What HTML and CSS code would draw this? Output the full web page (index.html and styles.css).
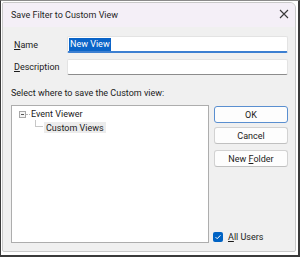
FILE: index.html
```html
<!DOCTYPE html>
<html>
<head>
<meta charset="utf-8">
<link rel="stylesheet" href="styles.css">
</head>
<body>
<div class="frame">
  <div class="window">
    <div class="titlebar">
      <span class="title">Save Filter to Custom View</span>
      <svg class="close" width="10" height="10" viewBox="0 0 10 10"><path d="M1 1 L9 9 M9 1 L1 9" stroke="#3a3a3a" stroke-width="1.1" fill="none"/></svg>
    </div>
    <div class="content">
      <div class="row">
        <label class="lbl"><u>N</u>ame</label>
        <div class="input focused"><span class="sel">New View</span></div>
      </div>
      <div class="row">
        <label class="lbl"><u>D</u>escription</label>
        <div class="input"></div>
      </div>
      <div class="prompt">Select where to save the Custom view:</div>
      <div class="main">
        <div class="tree">
          <div class="node">
            <span class="exp"><svg width="7" height="7" viewBox="0 0 7 7"><rect x="0.5" y="0.5" width="6" height="6" fill="#f4f4f4" stroke="#a8a8a8"/><path d="M2 3.5 H5" stroke="#555" stroke-width="1"/></svg></span>
            <span class="dots"></span>
            <span class="ntext">Event Viewer</span>
          </div>
          <div class="node child">
            <span class="conn"></span>
            <span class="ntext hl">Custom Views</span>
          </div>
        </div>
        <div class="side">
          <button class="btn default">OK</button>
          <button class="btn">Cancel</button>
          <button class="btn nf">New <u>F</u>older</button>
          <div class="spacer"></div>
          <label class="check"><span class="box"><svg width="10" height="10" viewBox="0 0 11 11"><path d="M2.8 5.6 L4.6 7.4 L8.2 3.6" stroke="#fff" stroke-width="1.1" fill="none"/></svg></span><span><u>A</u>ll Users</span></label>
        </div>
      </div>
    </div>
  </div>
</div>
</body>
</html>
```
FILE: styles.css
```css
html, body {
  margin: 0;
  padding: 0;
  background: #ffffff;
}
body {
  font-family: Roboto, "Noto Sans", sans-serif;
  font-size: 9px;
  color: #1b1b1b;
}
.frame {
  width: 300px;
  height: 257px;
  box-sizing: border-box;
  border-top: 1px solid #8a8a8a;
  border-left: 1px solid #3a3a3a;
  border-right: 2px solid #3a3a3a;
  border-bottom: 2px solid #3a3a3a;
  padding: 1px 2px 3px 1px;
  display: flex;
}
.window {
  flex: 1;
  display: flex;
  flex-direction: column;
  border: 1px solid #c9c9c9;
  border-radius: 2px 6px 2px 2px;
  background: #f0f0f0;
  overflow: hidden;
}
.titlebar {
  height: 24px;
  flex: none;
  background: #f4eff7;
  display: flex;
  align-items: center;
  padding: 0 6px 0 8px;
  justify-content: space-between;
}
.title {
  color: #1f1f1f;
}
.close {
  margin-top: -2px;
}
.content {
  flex: 1;
  display: flex;
  flex-direction: column;
  padding: 9px 7px 8px 8px;
}
.row {
  display: flex;
  align-items: center;
  height: 17px;
  margin-bottom: 5px;
}
.lbl {
  width: 53px;
  padding-left: 3px;
  flex: none;
}
.input {
  flex: 1;
  height: 16px;
  box-sizing: border-box;
  background: #fff;
  border: 1px solid #e3e3e3;
  border-bottom: 1px solid #8c8c8c;
  border-radius: 2px;
  display: flex;
  align-items: center;
  padding-left: 1px;
}
.input.focused {
  height: 17px;
  border-bottom: 2px solid #3c7fd1;
}
.sel {
  background: #0a64c8;
  color: #fff;
  padding: 0 1px;
  line-height: 13px;
}
.prompt {
  margin-top: 6px;
  height: 14px;
  line-height: 14px;
}
.main {
  flex: 1;
  display: flex;
  margin-top: 5px;
  gap: 5px;
}
.tree {
  width: 198px;
  box-sizing: border-box;
  background: #fff;
  border: 1px solid #adadad;
  padding: 1px 0 0 7px;
}
.node {
  display: flex;
  align-items: center;
  height: 14px;
}
.exp {
  width: 7px;
  height: 7px;
  display: flex;
}
.dots {
  width: 4px;
  height: 1px;
  border-top: 1px dotted #b5b5b5;
  margin-top: 1px;
}
.ntext {
  padding: 0 1px;
}
.child {
  padding-left: 16px;
  height: 11px;
  margin-top: 1px;
  align-items: stretch;
}
.conn {
  width: 7px;
  border-left: 1px solid #c7c7c7;
  border-bottom: 1px solid #c7c7c7;
  height: 6px;
  margin-top: -2px;
  margin-right: 1px;
}
.hl {
  background: #ececec;
  display: flex;
  align-items: center;
  padding: 0 2px;
}
.side {
  flex: 1;
  display: flex;
  flex-direction: column;
  padding-top: 1px;
}
.btn {
  font: inherit;
  color: #1b1b1b;
  height: 17px;
  background: #fdfdfd;
  border: 1px solid #d2d2d2;
  border-bottom-color: #c0c0c0;
  border-radius: 3px;
  padding: 0;
  margin-bottom: 4px;
}
.btn.default {
  border: 1px solid #5a8fd0;
}
.btn.nf {
  margin-top: 2px;
}
.spacer {
  flex: 1;
}
.check {
  display: flex;
  align-items: center;
  gap: 5px;
  margin-bottom: 1px;
  margin-left: -1px;
}
.box {
  width: 10px;
  height: 10px;
  background: #0063c4;
  border-radius: 2px;
  display: flex;
}
u {
  text-decoration-thickness: 1px;
  text-underline-offset: 1px;
}
```
